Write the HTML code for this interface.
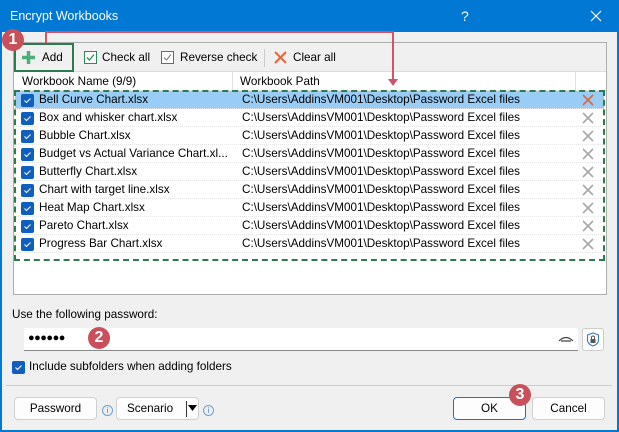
<!DOCTYPE html>
<html><head><meta charset="utf-8"><style>
*{box-sizing:border-box;margin:0;padding:0}
body{width:619px;height:432px;overflow:hidden;font-family:"Liberation Sans",sans-serif;font-size:11.7px;color:#000;background:#0078d4;position:relative}
.win{position:absolute;left:1px;top:0;width:617px;height:431px;background:#f0f0f0;border:1px solid #0078d4;border-top:none}
.title{position:absolute;left:0;top:0;width:619px;height:32px;background:#0078d4;color:#fff;font-size:12.5px}
.abs{position:absolute}
.panel{position:absolute;left:13px;top:42px;width:594px;height:253px;background:#fff;border:1px solid #adadad}
.tb{position:absolute;left:0;top:0;width:592px;height:29px;background:#f0f0f0;border-bottom:1px solid #ddd}
.hdr{position:absolute;left:0;top:29px;width:592px;height:19px;background:#fff;border-bottom:1px solid #e5e5e5}
.row{position:absolute;left:2px;width:589px;height:18px;border-bottom:1px dotted #e4e4e4}
.cb{position:absolute;left:7px;top:3px;width:13px;height:13px;background:#0f5fbf;border-radius:2px}
.cb svg{position:absolute;left:0;top:0}
.n{position:absolute;left:25px;top:2px}
.p{position:absolute;left:228px;top:2px}
.x{position:absolute;left:568px;top:3px}
.btn{position:absolute;height:23px;background:#fdfdfd;border:1px solid #d0d0d0;border-radius:4px;text-align:center;line-height:21px}
.badge{position:absolute;width:22px;height:22px;border-radius:50%;background:#c9505a;color:#fff;font-weight:bold;font-size:16px;text-align:center;line-height:22px}
.info{position:absolute;width:11px;height:11px;border:1px solid #6b9fd8;border-radius:50%;color:#4a86c8;font-size:8px;text-align:center;line-height:9px}
</style></head><body>
<div class="win"></div>
<div class="title"><span class="abs" style="left:10px;top:9px">Encrypt Workbooks</span><span class="abs" style="left:461px;top:8px;font-size:14px">?</span>
<svg class="abs" style="left:590px;top:10px" width="12" height="12"><path d="M1 1L11 11M11 1L1 11" stroke="#fff" stroke-width="1.2"/></svg></div>

<div class="panel">
<div class="tb">
 <div class="abs" style="left:0;top:0;width:60px;height:29px;border:2px solid #2e7a4f"></div>
 <svg class="abs" style="left:7px;top:7px" width="15" height="15"><path d="M7.5 1V14M1 7.5H14" stroke="#4caf7a" stroke-width="3.5"/></svg>
 <span class="abs" style="left:28px;top:8px">Add</span>
 <svg class="abs" style="left:70px;top:8px" width="13" height="13"><rect x=".5" y=".5" width="12" height="12" fill="#fff" stroke="#2e8a5a"/><path d="M3 6.5L5.5 9L10 3.5" stroke="#2e8a5a" fill="none" stroke-width="1.3"/></svg>
 <span class="abs" style="left:88px;top:8px">Check all</span>
 <svg class="abs" style="left:147px;top:8px" width="13" height="13"><rect x=".5" y=".5" width="12" height="12" fill="#fff" stroke="#2e8a5a"/><path d="M3 6.5L5.5 9L10 3.5" stroke="#777" fill="none" stroke-width="1"/></svg>
 <span class="abs" style="left:166px;top:8px">Reverse check</span>
 <div class="abs" style="left:250px;top:6px;width:1px;height:18px;background:#ccc"></div>
 <svg class="abs" style="left:260px;top:8px" width="13" height="13"><path d="M1 1L12 12M12 1L1 12" stroke="#e0673e" stroke-width="2"/></svg>
 <span class="abs" style="left:279px;top:8px">Clear all</span>
</div>
<div class="hdr"><span class="abs" style="left:8px;top:3px">Workbook Name (9/9)</span><div class="abs" style="left:218px;top:0;width:1px;height:19px;background:#e0e0e0"></div><span class="abs" style="left:226px;top:3px">Workbook Path</span><div class="abs" style="left:561px;top:0;width:1px;height:19px;background:#e0e0e0"></div></div>
</div>

<div class="abs" style="left:15px;top:91px;width:589px;height:18px;background:#99cdf6"></div>
<div id="rows"></div>
<div class="abs" style="left:14px;top:90px;width:591px;height:171px;border:2px dashed #2e7a4f"></div>

<div class="abs" style="left:45px;top:32px;width:2px;height:11px;background:#d0556a"></div>
<div class="abs" style="left:45px;top:31px;width:349px;height:2px;background:#d0556a"></div>
<div class="abs" style="left:392px;top:31px;width:2px;height:50px;background:#d0556a"></div>
<svg class="abs" style="left:388px;top:79px" width="10" height="8"><path d="M0 0H10L5 7Z" fill="#d0556a"/></svg>
<div class="badge" style="left:2px;top:29px">1</div>

<span class="abs" style="left:12px;top:308px">Use the following password:</span>
<div class="abs" style="left:24px;top:328px;width:554px;height:23px;background:#fff;border-bottom:1px solid #888"></div>
<span class="abs" style="left:28px;top:332px;font-size:11px;font-weight:bold;letter-spacing:-0.5px">●●●●●●</span>
<svg class="abs" style="left:558px;top:335px" width="16" height="8"><path d="M1 6Q8 -1 15 6M3 6H13" stroke="#444" fill="none" stroke-width="1.2"/></svg>
<div class="abs" style="left:582px;top:328px;width:22px;height:23px;background:#fff;border:1px solid #ccc;border-radius:3px"></div>
<svg class="abs" style="left:586px;top:332px" width="14" height="15"><path d="M7 1L12.5 3V8Q12.5 12 7 14Q1.5 12 1.5 8V3Z" stroke="#3a78c4" fill="none" stroke-width="1.1"/><rect x="4.5" y="7" width="5" height="4" fill="#555"/><path d="M5.5 7V5.5A1.5 1.5 0 0 1 8.5 5.5V7" stroke="#555" fill="none"/></svg>
<div class="badge" style="left:88px;top:327px">2</div>

<div class="abs" style="left:12px;top:361px;width:13px;height:13px;background:#0f5fbf;border-radius:2px"><svg width="13" height="13"><path d="M3.5 6.5L5.5 8.5L9.5 4.5" stroke="#fff" fill="none" stroke-width="1"/></svg></div>
<span class="abs" style="left:29px;top:360px">Include subfolders when adding folders</span>
<div class="abs" style="left:6px;top:385px;width:606px;height:1px;background:#ccc"></div>

<div class="btn" style="left:14px;top:397px;width:83px">Password</div>
<div class="info" style="left:102px;top:405px">i</div>
<div class="btn" style="left:116px;top:397px;width:83px;text-align:left;padding-left:10px">Scenario<div class="abs" style="left:69px;top:3px;width:1px;height:16px;background:#333"></div><svg class="abs" style="left:71px;top:7px" width="10" height="7"><path d="M0 0H9L4.5 6Z" fill="#000"/></svg></div>
<div class="info" style="left:203px;top:405px">i</div>
<div class="btn" style="left:453px;top:397px;width:73px;border-color:#1a73c8">OK</div>
<div class="btn" style="left:532px;top:397px;width:73px">Cancel</div>
<div class="badge" style="left:509px;top:384px">3</div>

<script>
var n=["Bell Curve Chart.xlsx","Box and whisker chart.xlsx","Bubble Chart.xlsx","Budget vs Actual Variance Chart.xl...","Butterfly Chart.xlsx","Chart with target line.xlsx","Heat Map Chart.xlsx","Pareto Chart.xlsx","Progress Bar Chart.xlsx"];
var h="";
for(var i=0;i<9;i++){var c=i==0?"#e0673e":"#a8a8a8";
h+='<div class="row" style="left:14px;top:'+(91+i*18)+'px"><div class="cb"><svg width="13" height="13"><path d="M3.5 6.5L5.5 8.5L9.5 4.5" stroke="#fff" fill="none" stroke-width="1"/></svg></div><span class="n">'+n[i]+'</span><span class="p">C:\\Users\\AddinsVM001\\Desktop\\Password Excel files</span><svg class="x" width="12" height="12"><path d="M1 1L11 11M11 1L1 11" stroke="'+c+'" stroke-width="1.6"/></svg></div>';}
document.getElementById("rows").outerHTML=h;
</script>
</body></html>
